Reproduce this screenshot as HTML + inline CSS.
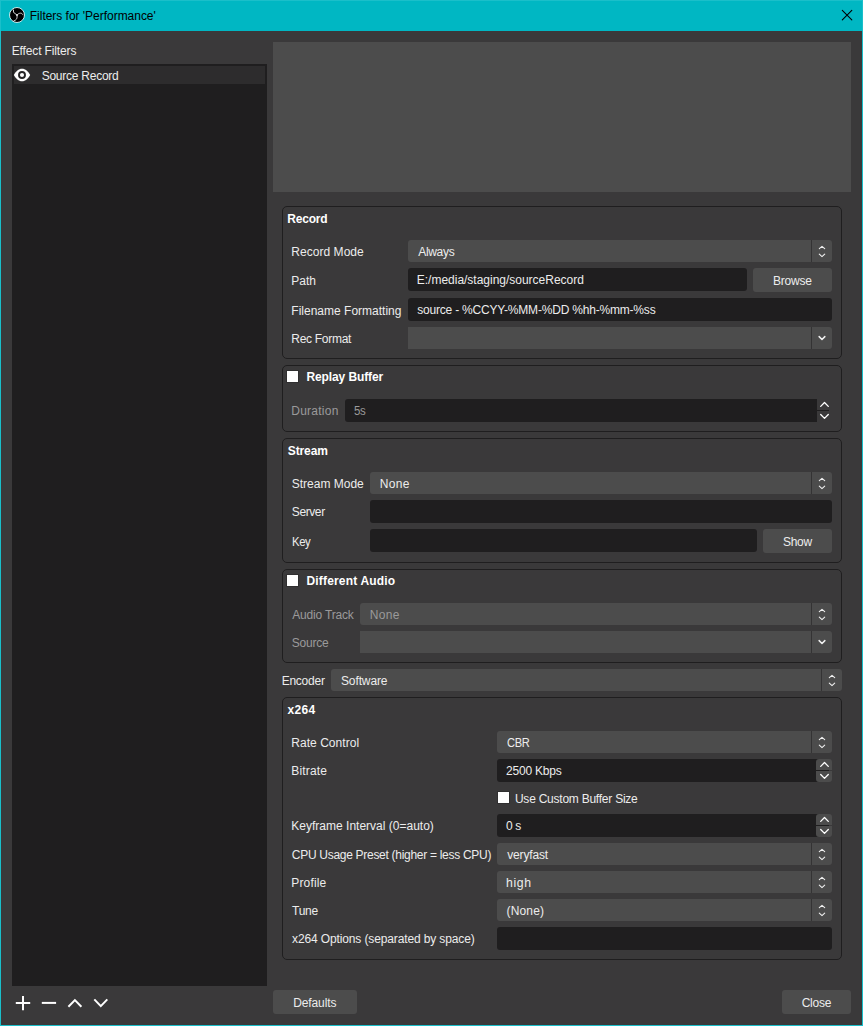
<!DOCTYPE html>
<html lang="en"><head><meta charset="utf-8"><title>Filters for 'Performance'</title>
<style>
*{box-sizing:border-box;margin:0;padding:0}
html,body{width:863px;height:1026px;overflow:hidden;background:#3a393a}
body{position:relative;font-family:"Liberation Sans",sans-serif;font-size:12px;color:#ececec}
.a,.f,.c,.gb,.ck{position:absolute}
.t{position:absolute;white-space:nowrap;line-height:16px;height:16px;transform-origin:0 0}
.gb{border:1px solid #1f1e1f;border-radius:5px}
.f{background:#1f1e1f;border-radius:3px}
.c{background:#4c4c4c;border-radius:3px}
.ck{background:#fff;box-shadow:0 0 0 1px rgba(31,30,31,.35)}
.b{font-weight:bold;color:#fff}
.d{color:#9a9a9a}
.k{color:#000}
svg{position:absolute;left:0;top:0}
</style></head><body>
<div class="a" style="left:0;top:0;width:863px;height:1026px;background:#00b7c3;border:1px solid #1abfca"></div>
<div class="a" style="left:1px;top:31px;width:861px;height:994px;background:#3a393a"></div>
<div class="a" style="left:12px;top:64px;width:255px;height:922px;background:#1f1e1f"></div>
<div class="a" style="left:14px;top:66px;width:251px;height:18px;background:#2d2c2d"></div>
<div class="a" style="left:273px;top:42px;width:578px;height:150px;background:#4c4c4c"></div>
<div class="gb" style="left:282px;top:206px;width:560px;height:153px"></div>
<div class="gb" style="left:282px;top:365px;width:560px;height:67px"></div>
<div class="gb" style="left:282px;top:438px;width:560px;height:125px"></div>
<div class="gb" style="left:282px;top:569px;width:560px;height:94px"></div>
<div class="gb" style="left:282px;top:697px;width:560px;height:263px"></div>
<div class="c" style="left:408px;top:240px;width:424px;height:22px"></div>
<div class="a" style="left:811px;top:240px;width:1px;height:22px;background:#343334"></div>
<div class="f" style="left:408px;top:268px;width:339px;height:23px"></div>
<div class="c" style="left:753px;top:268px;width:79px;height:24px"></div>
<div class="f" style="left:408px;top:298px;width:424px;height:23px"></div>
<div class="c" style="left:408px;top:327px;width:424px;height:22px;border-radius:0 3px 3px 0"></div>
<div class="a" style="left:811px;top:327px;width:1px;height:22px;background:#343334"></div>
<div class="ck" style="left:287px;top:371px;width:11px;height:11px"></div>
<div class="f" style="left:345px;top:399px;width:472px;height:23px;border-radius:3px 0 0 3px"></div>
<div class="a" style="left:816px;top:410px;width:13px;height:1px;background:#1f1e1f"></div>
<div class="c" style="left:370px;top:472px;width:462px;height:22px"></div>
<div class="a" style="left:811px;top:472px;width:1px;height:22px;background:#343334"></div>
<div class="f" style="left:370px;top:500px;width:462px;height:23px"></div>
<div class="f" style="left:370px;top:529px;width:387px;height:23px"></div>
<div class="c" style="left:763px;top:529px;width:69px;height:24px"></div>
<div class="ck" style="left:287px;top:575px;width:11px;height:11px"></div>
<div class="c" style="left:360px;top:603px;width:472px;height:22px"></div>
<div class="a" style="left:811px;top:603px;width:1px;height:22px;background:#343334"></div>
<div class="c" style="left:360px;top:631px;width:472px;height:22px;border-radius:0 3px 3px 0"></div>
<div class="a" style="left:811px;top:631px;width:1px;height:22px;background:#343334"></div>
<div class="c" style="left:331px;top:669px;width:511px;height:22px"></div>
<div class="a" style="left:821px;top:669px;width:1px;height:22px;background:#343334"></div>
<div class="c" style="left:497px;top:731px;width:335px;height:22px"></div>
<div class="a" style="left:811px;top:731px;width:1px;height:22px;background:#343334"></div>
<div class="f" style="left:497px;top:759px;width:332px;height:23px;border-radius:3px 0 0 3px"></div>
<div class="c" style="left:816px;top:759px;width:16px;height:11px;border-radius:3px 3px 0 0"></div>
<div class="c" style="left:816px;top:771px;width:16px;height:11px;border-radius:0 0 3px 3px"></div>
<div class="ck" style="left:498px;top:792px;width:11px;height:11px"></div>
<div class="f" style="left:497px;top:814px;width:332px;height:23px;border-radius:3px 0 0 3px"></div>
<div class="c" style="left:816px;top:814px;width:16px;height:11px;border-radius:3px 3px 0 0"></div>
<div class="c" style="left:816px;top:826px;width:16px;height:11px;border-radius:0 0 3px 3px"></div>
<div class="c" style="left:497px;top:843px;width:335px;height:22px"></div>
<div class="a" style="left:811px;top:843px;width:1px;height:22px;background:#343334"></div>
<div class="c" style="left:497px;top:871px;width:335px;height:22px"></div>
<div class="a" style="left:811px;top:871px;width:1px;height:22px;background:#343334"></div>
<div class="c" style="left:497px;top:899px;width:335px;height:22px"></div>
<div class="a" style="left:811px;top:899px;width:1px;height:22px;background:#343334"></div>
<div class="f" style="left:497px;top:927px;width:335px;height:23px"></div>
<div class="c" style="left:273px;top:990px;width:84px;height:24px"></div>
<div class="c" style="left:782px;top:990px;width:69px;height:24px"></div>
<div class="t k" style="left:29.80px;top:8px;letter-spacing:-0.025px">Filters for 'Performance'</div>
<div class="t" style="left:11.70px;top:43px;letter-spacing:-0.135px">Effect Filters</div>
<div class="t" style="left:41.70px;top:68px;letter-spacing:-0.250px">Source Record</div>
<div class="t b" style="left:287.25px;top:211px;letter-spacing:-0.210px">Record</div>
<div class="t" style="left:291.30px;top:244px;letter-spacing:0.040px">Record Mode</div>
<div class="t" style="left:418.20px;top:244px;letter-spacing:-0.300px">Always</div>
<div class="t" style="left:291.30px;top:273px;letter-spacing:-0.033px">Path</div>
<div class="t" style="left:416.80px;top:272px;letter-spacing:-0.013px">E:/media/staging/sourceRecord</div>
<div class="t" style="left:772.95px;top:273px;letter-spacing:-0.200px">Browse</div>
<div class="t" style="left:291.30px;top:303px;letter-spacing:0.008px">Filename Formatting</div>
<div class="t" style="left:417.15px;top:302px;letter-spacing:-0.195px">source - %CCYY-%MM-%DD %hh-%mm-%ss</div>
<div class="t" style="left:291.30px;top:331px;letter-spacing:-0.289px">Rec Format</div>
<div class="t b" style="left:306.45px;top:369px;letter-spacing:-0.104px">Replay Buffer</div>
<div class="t d" style="left:291.30px;top:403px;letter-spacing:0.236px">Duration</div>
<div class="t d" style="left:354.20px;top:403px;letter-spacing:-0.400px;transform:scaleX(0.9565)">5s</div>
<div class="t b" style="left:287.75px;top:443px;letter-spacing:-0.110px">Stream</div>
<div class="t" style="left:291.80px;top:476px;letter-spacing:-0.010px">Stream Mode</div>
<div class="t" style="left:379.70px;top:476px;letter-spacing:0.333px">None</div>
<div class="t" style="left:291.80px;top:504px;letter-spacing:-0.400px">Server</div>
<div class="t" style="left:291.55px;top:534px;letter-spacing:-0.400px;transform:scaleX(0.9421)">Key</div>
<div class="t" style="left:782.90px;top:534px;letter-spacing:-0.267px">Show</div>
<div class="t b" style="left:306.45px;top:573px;letter-spacing:0.179px">Different Audio</div>
<div class="t d" style="left:292.30px;top:607px;letter-spacing:-0.185px">Audio Track</div>
<div class="t d" style="left:369.70px;top:607px;letter-spacing:0.333px">None</div>
<div class="t d" style="left:291.80px;top:635px;letter-spacing:-0.220px">Source</div>
<div class="t" style="left:281.70px;top:673px;letter-spacing:-0.250px">Encoder</div>
<div class="t" style="left:340.95px;top:673px;letter-spacing:-0.107px">Software</div>
<div class="t b" style="left:287.50px;top:702px;letter-spacing:0.317px">x264</div>
<div class="t" style="left:291.30px;top:735px;letter-spacing:0.036px">Rate Control</div>
<div class="t" style="left:506.70px;top:735px;letter-spacing:-0.400px;transform:scaleX(0.9255)">CBR</div>
<div class="t" style="left:291.30px;top:763px;letter-spacing:0.150px">Bitrate</div>
<div class="t" style="left:505.95px;top:763px;letter-spacing:-0.188px">2500 Kbps</div>
<div class="t" style="left:514.95px;top:791px;letter-spacing:-0.238px">Use Custom Buffer Size</div>
<div class="t" style="left:291.30px;top:818px;letter-spacing:0.006px">Keyframe Interval (0=auto)</div>
<div class="t" style="left:505.95px;top:818px;letter-spacing:-0.375px">0 s</div>
<div class="t" style="left:291.80px;top:847px;letter-spacing:-0.289px">CPU Usage Preset (higher = less CPU)</div>
<div class="t" style="left:507.20px;top:847px;letter-spacing:-0.143px">veryfast</div>
<div class="t" style="left:291.30px;top:875px;letter-spacing:0.150px">Profile</div>
<div class="t" style="left:506.45px;top:875px;letter-spacing:0.600px;transform:scaleX(1.0217)">high</div>
<div class="t" style="left:292.05px;top:903px;letter-spacing:-0.283px">Tune</div>
<div class="t" style="left:506.45px;top:903px;letter-spacing:0.200px">(None)</div>
<div class="t" style="left:292.05px;top:931px;letter-spacing:-0.128px">x264 Options (separated by space)</div>
<div class="t" style="left:293.20px;top:995px;letter-spacing:-0.107px">Defaults</div>
<div class="t" style="left:801.70px;top:995px;letter-spacing:-0.250px">Close</div>
<svg width="863" height="1026" viewBox="0 0 863 1026">
<path d="M819.3 248.7 L822 246.3 L824.7 248.7" fill="none" stroke="#f0f0f0" stroke-width="1.1" stroke-linecap="round" stroke-linejoin="round"/>
<path d="M819.3 254.20000000000002 L822 256.6 L824.7 254.20000000000002" fill="none" stroke="#f0f0f0" stroke-width="1.1" stroke-linecap="round" stroke-linejoin="round"/>
<path d="M819.15 336.65000000000003 L822 339.55 L824.85 336.65000000000003" fill="none" stroke="#f0f0f0" stroke-width="1.5" stroke-linecap="round" stroke-linejoin="round"/>
<path d="M820.7 406.34999999999997 L824.5 402.45 L828.3 406.34999999999997" fill="none" stroke="#fff" stroke-width="1.3" stroke-linecap="round" stroke-linejoin="round"/>
<path d="M820.7 414.45 L824.5 418.34999999999997 L828.3 414.45" fill="none" stroke="#fff" stroke-width="1.3" stroke-linecap="round" stroke-linejoin="round"/>
<path d="M819.3 480.7 L822 478.3 L824.7 480.7" fill="none" stroke="#f0f0f0" stroke-width="1.1" stroke-linecap="round" stroke-linejoin="round"/>
<path d="M819.3 486.2 L822 488.59999999999997 L824.7 486.2" fill="none" stroke="#f0f0f0" stroke-width="1.1" stroke-linecap="round" stroke-linejoin="round"/>
<path d="M819.3 611.7 L822 609.3 L824.7 611.7" fill="none" stroke="#f0f0f0" stroke-width="1.1" stroke-linecap="round" stroke-linejoin="round"/>
<path d="M819.3 617.1999999999999 L822 619.6 L824.7 617.1999999999999" fill="none" stroke="#f0f0f0" stroke-width="1.1" stroke-linecap="round" stroke-linejoin="round"/>
<path d="M819.15 640.65 L822 643.5500000000001 L824.85 640.65" fill="none" stroke="#f0f0f0" stroke-width="1.5" stroke-linecap="round" stroke-linejoin="round"/>
<path d="M829.3 677.7 L832 675.3 L834.7 677.7" fill="none" stroke="#f0f0f0" stroke-width="1.1" stroke-linecap="round" stroke-linejoin="round"/>
<path d="M829.3 683.1999999999999 L832 685.6 L834.7 683.1999999999999" fill="none" stroke="#f0f0f0" stroke-width="1.1" stroke-linecap="round" stroke-linejoin="round"/>
<path d="M819.3 739.7 L822 737.3 L824.7 739.7" fill="none" stroke="#f0f0f0" stroke-width="1.1" stroke-linecap="round" stroke-linejoin="round"/>
<path d="M819.3 745.1999999999999 L822 747.6 L824.7 745.1999999999999" fill="none" stroke="#f0f0f0" stroke-width="1.1" stroke-linecap="round" stroke-linejoin="round"/>
<path d="M820.7 766.35 L824.5 762.4499999999999 L828.3 766.35" fill="none" stroke="#fff" stroke-width="1.3" stroke-linecap="round" stroke-linejoin="round"/>
<path d="M820.7 774.4499999999999 L824.5 778.35 L828.3 774.4499999999999" fill="none" stroke="#fff" stroke-width="1.3" stroke-linecap="round" stroke-linejoin="round"/>
<path d="M820.7 821.35 L824.5 817.4499999999999 L828.3 821.35" fill="none" stroke="#fff" stroke-width="1.3" stroke-linecap="round" stroke-linejoin="round"/>
<path d="M820.7 829.4499999999999 L824.5 833.35 L828.3 829.4499999999999" fill="none" stroke="#fff" stroke-width="1.3" stroke-linecap="round" stroke-linejoin="round"/>
<path d="M819.3 851.7 L822 849.3 L824.7 851.7" fill="none" stroke="#f0f0f0" stroke-width="1.1" stroke-linecap="round" stroke-linejoin="round"/>
<path d="M819.3 857.1999999999999 L822 859.6 L824.7 857.1999999999999" fill="none" stroke="#f0f0f0" stroke-width="1.1" stroke-linecap="round" stroke-linejoin="round"/>
<path d="M819.3 879.7 L822 877.3 L824.7 879.7" fill="none" stroke="#f0f0f0" stroke-width="1.1" stroke-linecap="round" stroke-linejoin="round"/>
<path d="M819.3 885.1999999999999 L822 887.6 L824.7 885.1999999999999" fill="none" stroke="#f0f0f0" stroke-width="1.1" stroke-linecap="round" stroke-linejoin="round"/>
<path d="M819.3 907.7 L822 905.3 L824.7 907.7" fill="none" stroke="#f0f0f0" stroke-width="1.1" stroke-linecap="round" stroke-linejoin="round"/>
<path d="M819.3 913.1999999999999 L822 915.6 L824.7 913.1999999999999" fill="none" stroke="#f0f0f0" stroke-width="1.1" stroke-linecap="round" stroke-linejoin="round"/>
<path d="M15.8 1003h14.4M23 995.9v14.3" stroke="#fefefe" stroke-width="2" fill="none"/>
<path d="M41.8 1002.9h14.3" stroke="#fefefe" stroke-width="2" fill="none"/>
<path d="M68.4 1006.7 L74.9 1000.1 L81.4 1006.7" stroke="#fefefe" stroke-width="2" fill="none"/>
<path d="M94.3 999.4 L100.8 1006.1 L107.3 999.4" stroke="#fefefe" stroke-width="2" fill="none"/>
<path d="M842.3 10.3 L851.8 19.8 M851.8 10.3 L842.3 19.8" stroke="#000" stroke-width="1.1" stroke-linecap="round" fill="none"/>
<path d="M13.8 75 C15.8 71.4 18.6 68.7 22 68.7 C25.4 68.7 28.2 71.4 30.2 75 C28.2 78.6 25.4 81.3 22 81.3 C18.6 81.3 15.8 78.6 13.8 75 Z" fill="#fefefe"/>
<circle cx="22" cy="75" r="3" fill="none" stroke="#252425" stroke-width="1.9"/>
<circle cx="17" cy="15" r="7.5" fill="#000" stroke="#dff8fa" stroke-width="0.9"/>
<g fill="none" stroke="#e6e6e6" stroke-width="1" stroke-linecap="round"><path d="M13.4 10 C13.2 12 13.8 13 15.2 13.7 C16 14.1 16.6 14.5 17 15"/><path d="M17 15 C18 13.8 19.2 13.2 20.6 13.2 C21.8 13.2 22.6 13.9 22.9 14.8" stroke-width="0.9"/><path d="M17 15 C17.2 16.6 17.2 18 16.4 19.2 C15.8 20.1 14.8 20.7 13.9 20.9" stroke-width="0.9"/></g>
<circle cx="17" cy="15" r="0.9" fill="#e0e0e0"/>
</svg>
</body></html>
